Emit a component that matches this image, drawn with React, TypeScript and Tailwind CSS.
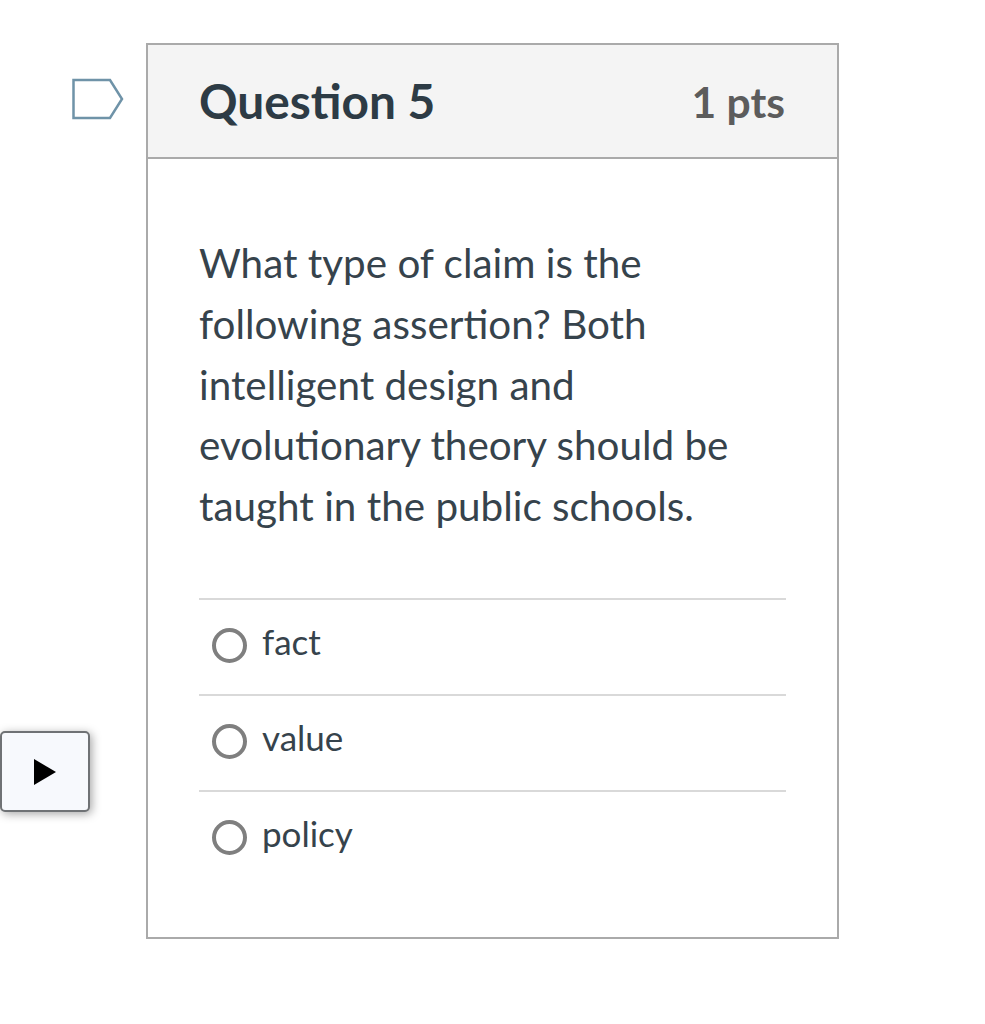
import React from 'react';

const answers = ['fact', 'value', 'policy'];

const App = () => {
  return (
    <div className="relative min-h-[1024px] bg-white pt-[43px] pl-[146px] font-['Lato',sans-serif] text-[#2d3b45]">
      <svg className="absolute left-[72px] top-[78px]" width="52" height="42" viewBox="0 0 52 42" fill="none">
        <path d="M1.5 2h36.5l12 19-12 19H1.5z" fill="#fff" stroke="#6f93a8" strokeWidth="2.5" />
      </svg>

      <button className="absolute left-0 top-[731px] flex h-[81px] w-[90px] items-center justify-center rounded-[5px] border-2 border-[#6f7275] bg-[#f7f9fd] shadow-[2px_2px_10px_rgba(0,0,0,0.35)]">
        <svg width="24" height="26" viewBox="0 0 24 26">
          <path d="M1 0l22 13L1 26z" fill="#000" />
        </svg>
      </button>

      <div className="h-[896px] w-[693px] border-2 border-[#aaaaaa]">
        <div className="flex h-[114px] items-center justify-between border-b-2 border-[#aaaaaa] bg-[#f4f4f4] pr-[52px] pl-[51px]">
          <h2 className="text-[47.8px] font-bold leading-none">Question 5</h2>
          <div className="pt-[2px] text-[42.6px] font-bold leading-none text-[#5c5c5c]">1 pts</div>
        </div>

        <div className="px-[51px] pt-[74px]">
          <p className="text-[40.4px] leading-[60.75px] text-[#36434c]">
            What type of claim is the
            <br />
            following assertion? Both
            <br />
            intelligent design and
            <br />
            evolutionary theory should be
            <br />
            taught in the public schools.
          </p>

          <div className="mt-[61.25px]">
            {answers.map((answer) => (
              <div key={answer} className="flex h-[96px] items-start gap-[15px] border-t-2 border-[#d9d9d9] pt-[28px] pl-[13px]">
                <span className="h-[35px] w-[35px] rounded-full border-[4px] border-[#7f7f7f] bg-white" />
                <span className="text-[35px] leading-[26px] text-[#36434c]">{answer}</span>
              </div>
            ))}
          </div>
        </div>
      </div>
    </div>
  );
};

export default App;
